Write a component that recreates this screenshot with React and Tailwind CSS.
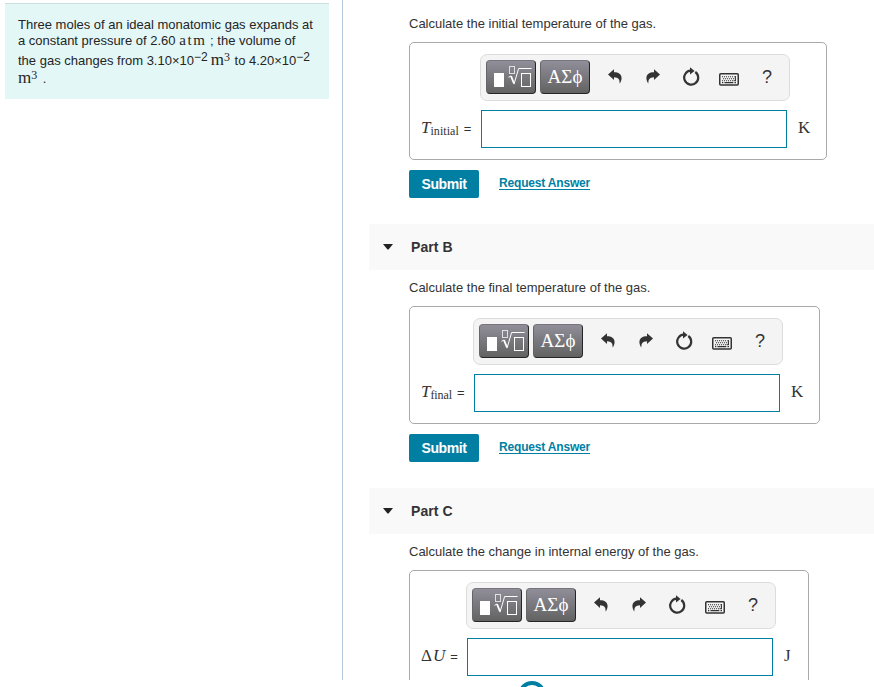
const SERIF = "font-['Liberation_Serif',serif]";

function Undo() {
  return (
    <svg width="14" height="15" viewBox="0 0 14 15" fill="#333">
      <path d="M0 5.5 L6 0.3 V3.2 C10.5 3.2 13.6 5.2 13.6 9 C13.6 11.2 12.8 13.2 11.6 14.6 C11.8 10.5 10.6 8.4 6 8.3 V11 Z" />
    </svg>
  );
}

function Redo() {
  return (
    <svg width="14" height="15" viewBox="0 0 14 15" fill="#333">
      <path d="M14 5.5 L8 0.3 V3.2 C3.5 3.2 0.4 5.2 0.4 9 C0.4 11.2 1.2 13.2 2.4 14.6 C2.2 10.5 3.4 8.4 8 8.3 V11 Z" />
    </svg>
  );
}

function Reset() {
  return (
    <svg width="18" height="19" viewBox="0 0 18 19" fill="none">
      <path d="M13.3 5 A7 7 0 1 1 8.6 3.7" stroke="#333" strokeWidth="2.2" />
      <path d="M8 0.2 L12.6 3.9 L8 7.4 Z" fill="#333" />
    </svg>
  );
}

function Keyboard() {
  return (
    <svg width="20" height="13" viewBox="0 0 20 13" fill="none" stroke="#333">
      <rect x="0.75" y="0.75" width="18.5" height="11.2" rx="1" strokeWidth="1.5" />
      <path d="M3 3.7 H15.5 M4 5.7 H15 M3 7.7 H14" strokeWidth="1.1" strokeDasharray="1.1 0.9" />
      <path d="M16.4 3 V8 M14.5 7.7 H17" strokeWidth="1.1" />
      <path d="M3 9.6 H4.3 M5.5 9.6 H14.3 M15.5 9.6 H17" strokeWidth="1.2" />
    </svg>
  );
}

function RootTemplate() {
  return (
    <svg width="38" height="23" viewBox="0 0 38 23" fill="none" stroke="#fff">
      <rect x="0" y="8" width="10" height="14" fill="#fff" stroke="none" />
      <rect x="15.5" y="1.5" width="5" height="7" strokeWidth="1" opacity="0.75" />
      <path d="M14.5 12.3 L17 11" strokeWidth="1" />
      <path d="M17 11 L20 18.5" strokeWidth="1.9" />
      <path d="M20 19.2 L24.6 3.5 H37.6" strokeWidth="1" />
      <rect x="27.5" y="8.5" width="9" height="13" strokeWidth="1" />
    </svg>
  );
}

const darkButton =
  "flex h-[34px] w-[50px] items-center justify-center rounded-[4px] border border-t-[#77757b] border-l-[#66656a] border-r-[#252525] border-b-[#252525] bg-linear-to-b from-[#918e99] to-[#626262]";
const iconButton = "flex h-[34px] w-[38px] items-center justify-center";

function Toolbar() {
  return (
    <div className="-ml-px flex h-[47px] w-[310px] items-start rounded-[7px] border border-[#dcdcdc] bg-[#f4f4f4] pt-[5px] pl-[5px]">
      <button className={darkButton}><span className="-mt-px ml-[3px]"><RootTemplate /></span></button>
      <button className={`${darkButton} ${SERIF} ml-1 text-[19px] leading-none text-white`}>
        <span className="-mt-[2px]">ΑΣϕ</span>
      </button>
      <button className={`${iconButton} ml-[6px] pb-[2px]`}><Undo /></button>
      <button className={`${iconButton} pb-[2px]`}><Redo /></button>
      <button className={`${iconButton} pb-[2px]`}><Reset /></button>
      <button className={`${iconButton} pt-1`}><Keyboard /></button>
      <button className={`${iconButton} text-[18px] text-[#333]`}>?</button>
    </div>
  );
}

function AnswerBox({ className, labelClass, label, unit }) {
  return (
    <div className={`flex h-[118px] rounded-[5px] border border-[#a9a9a9] pt-[11px] pl-[11px] ${className}`}>
      <div className={`shrink-0 pt-[62px] whitespace-nowrap text-[#333] ${labelClass}`}>{label}</div>
      <div className="w-[306px] shrink-0">
        <Toolbar />
        <input className="mt-[9px] block h-[38px] w-[306px] border border-[#007fa3] bg-white outline-none" />
      </div>
      <div className={`${SERIF} ml-[11px] pt-[62px] text-[17px] leading-6 text-[#333]`}>{unit}</div>
    </div>
  );
}

function PartHeader({ children }) {
  return (
    <div className="ml-[26px] flex h-[46px] shrink-0 items-center bg-[#f9f9f9] pl-[14px]">
      <svg width="10" height="6" viewBox="0 0 10 6" fill="#222"><path d="M0 0 H10 L5.5 5.6 H4.5 Z" /></svg>
      <h2 className="ml-[18px] text-[14px] font-bold tracking-[0.1px] text-[#333]">{children}</h2>
    </div>
  );
}

function Part({ first, actions = true, question, children }) {
  return (
    <div className={`shrink-0 pl-[66px] ${first ? "h-[224px] pt-[15px]" : "h-[218px] pt-[9px]"}`}>
      <p className="text-[13px] leading-[18px] whitespace-nowrap text-[#333]">{question}</p>
      <div className="mt-[9px]">{children}</div>
      {actions && (
        <div className="mt-[10px] flex items-center">
          <button className="h-7 w-[70px] rounded-[2px] bg-[#007fa3] text-[14px] font-bold tracking-[-0.4px] text-white">Submit</button>
          <a className="-mt-[2px] ml-5 text-[12px] font-bold tracking-[-0.18px] text-[#007fa3] underline underline-offset-2">Request Answer</a>
        </div>
      )}
    </div>
  );
}

function Exp({ children, serif }) {
  return <span className={`relative -top-[4px] text-[12px] leading-none ${serif ? SERIF : ""}`}>{children}</span>;
}

function QuantityLabel({ symbol, sub, subClass }) {
  return (
    <span className="flex items-baseline leading-6">
      <span className={`${SERIF} text-[17px] italic`}>{symbol}</span>
      {sub && <span className={`${SERIF} relative top-[2px] text-[12px] ${subClass}`}>{sub}</span>}
      <span className="ml-[5px] text-[13px]">=</span>
    </span>
  );
}

export default function App() {
  return (
    <div className="relative h-[687px] w-[874px] overflow-hidden bg-white font-['Liberation_Sans',Arial,sans-serif]">
      <div className="flex h-[680px] overflow-hidden">
        <aside className="w-[342px] shrink-0 pt-[3px] pl-[5px]">
          <div className="h-24 w-[324px] border-t border-[#ccdfe0] bg-[#e3f7f6] pl-[13px] pt-[13px] text-[13px] whitespace-nowrap text-[#252525]">
            <div className="h-4 leading-4">Three moles of an ideal monatomic gas expands at</div>
            <div className="h-[18px] leading-4">
              a constant pressure of 2.60 <span className={`${SERIF} text-[15px] leading-none tracking-[1.6px]`}>atm</span> ; the volume of
            </div>
            <div className="h-[18px] leading-4">
              the gas changes from 3.10×10<Exp>−2</Exp><span className={`${SERIF} ml-[3px] text-[17px] leading-none`}>m</span><Exp serif>3</Exp>
              <span className="ml-px"> to 4.20×10</span><Exp>−2</Exp>
            </div>
            <div className="h-[18px] leading-[18px]">
              <span className={`${SERIF} text-[17px] leading-none`}>m</span><Exp serif>3</Exp><span className="ml-[2px]"> .</span>
            </div>
          </div>
        </aside>
        <main className="flex-1 border-l border-[#b5c9dc]">
          <Part first question="Calculate the initial temperature of the gas.">
            <AnswerBox className="w-[418px]" labelClass="w-[60px]" unit="K"
              label={<QuantityLabel symbol="T" sub="initial" subClass="tracking-[0.05px]" />} />
          </Part>
          <PartHeader>Part B</PartHeader>
          <Part question="Calculate the final temperature of the gas.">
            <AnswerBox className="w-[411px]" labelClass="w-[53px]" unit="K"
              label={<QuantityLabel symbol="T" sub="final" subClass="tracking-[-0.1px]" />} />
          </Part>
          <PartHeader>Part C</PartHeader>
          <Part actions={false} question="Calculate the change in internal energy of the gas.">
            <AnswerBox className="w-[400px]" labelClass="w-[46px]" unit="J"
              label={<QuantityLabel symbol={<><span className="mr-px not-italic">Δ</span>U</>} />} />
          </Part>
        </main>
      </div>
      <div className="absolute top-[681px] left-[518px] size-7 rounded-full border-4 border-[#007fa3] bg-white" />
    </div>
  );
}
